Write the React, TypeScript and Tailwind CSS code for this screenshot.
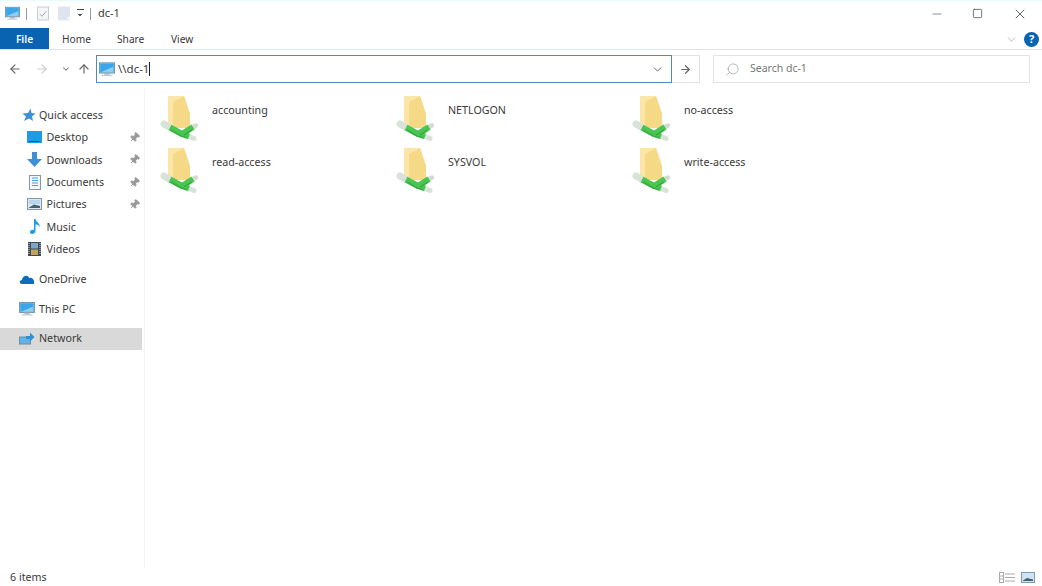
import React from 'react';
import { ArrowLeft, ArrowRight, ArrowUp, ChevronDown, Minus, Pin, Search, Square, X } from 'lucide-react';

function Monitor({ className }: { className?: string }) {
  return (
    <svg viewBox="0 0 18 16" className={className}>
      <rect x="0.5" y="0.5" width="17" height="11.5" fill="#8fc6ea" stroke="#6f8da3" />
      <rect x="1.5" y="1.5" width="15" height="9.5" fill="#3aa5e8" />
      <path d="M2 11 L16 5 V11 Z" fill="#8ccff6" />
      <rect x="6" y="12" width="6" height="2" fill="#a9b7c1" />
      <rect x="3" y="14" width="12" height="1.5" fill="#c3ccd3" />
    </svg>
  );
}

function ShareFolder() {
  return (
    <svg viewBox="0 0 40 48" className="h-12 w-10 shrink-0">
      <path d="M8 2 H24 L30 20 V34 H8 Z" fill="#f9e29b" />
      <path d="M13 8 L24 2 L30 20 V34 H13 Z" fill="#f6d987" />
      <path d="M8 2 H24 L13 8 V34 H8 Z" fill="#fbe6a8" />
      <path d="M4 30 L10 33.5" stroke="#d9e2d9" strokeWidth="7" strokeLinecap="round" />
      <path d="M33 33 L36 31.5" stroke="#d3dcd3" strokeWidth="4.5" strokeLinecap="round" />
      <path d="M29 42.5 L34 44.5" stroke="#d9e2d9" strokeWidth="5" strokeLinecap="round" />
      <path d="M10 33.5 L22 40 L33 33 M22 40 L29 42.5" fill="none" stroke="#4ac552" strokeWidth="6" strokeLinejoin="round" />
      <path d="M11 36 L21 42 L27 43.5 M24 41 L32 36" fill="none" stroke="#33a83c" strokeWidth="1.2" />
    </svg>
  );
}

const quick = [
  { name: 'Desktop', pin: true, icon: <svg viewBox="0 0 15 12" className="h-3 w-[15px]"><rect width="15" height="12" fill="#1c9be8" /><rect x="2" y="10" width="10" height="1" fill="#0b5c94" /></svg> },
  { name: 'Downloads', pin: true, icon: <svg viewBox="0 0 15 15" className="h-[15px] w-[15px]"><path d="M5 0 H10 V7 H15 L7.5 15 L0 7 H5 Z" fill="#3d8fd6" /></svg> },
  { name: 'Documents', pin: true, icon: <svg viewBox="0 0 12 15" className="h-[15px] w-3"><rect x="0.5" y="0.5" width="11" height="14" fill="#f4f7fa" stroke="#8a97a3" /><path d="M3 3 H9 M3 5.5 H9 M3 8 H9 M3 10.5 H9" stroke="#4ba3dd" /></svg> },
  { name: 'Pictures', pin: true, icon: <svg viewBox="0 0 15 12" className="h-3 w-[15px]"><rect x="0.5" y="0.5" width="14" height="11" fill="#dfe9f1" stroke="#8a97a3" /><path d="M2 9.5 L7 6.5 L13 8 V10 H2 Z" fill="#45606f" /><rect x="2" y="2" width="11" height="4" fill="#b9d6ea" /></svg> },
  { name: 'Music', pin: false, icon: <svg viewBox="0 0 12 15" className="h-[15px] w-3"><path d="M5 0 H6.5 C7 3 11 4 11 8 C10 6 8 5.5 6.5 5.5 V12 C6.5 14 4.5 15 3 15 C1.5 15 1 14 1 13 C1 11.5 3 10.5 5 11 Z" fill="#1c9be8" /></svg> },
  { name: 'Videos', pin: false, icon: <svg viewBox="0 0 13 14" className="h-[14px] w-[13px]"><rect width="13" height="14" fill="#3e4a56" /><rect x="3" y="1" width="7" height="5.5" fill="#7ea6c4" /><rect x="3" y="7.5" width="7" height="5.5" fill="#c2a35a" /><path d="M1 1 V13 M12 1 V13" stroke="#d5dbe0" strokeDasharray="1 1" /></svg> },
];

const shares = ['accounting', 'NETLOGON', 'no-access', 'read-access', 'SYSVOL', 'write-access'];

export default function App() {
  return (
    <div className="flex h-screen w-full flex-col overflow-hidden bg-white text-[10.7px] text-[#3a3a3a] font-['Noto_Sans','Open_Sans',sans-serif]">
      {/* title bar */}
      <div className="flex h-7 shrink-0 items-center border-t border-[#e6fbfb] pb-[2px] pl-[5px]">
        <Monitor className="h-[15px] w-[15px]" />
        <div className="ml-[6px] h-3 w-px bg-[#9a9a9a]" />
        <svg viewBox="0 0 13 15" className="ml-[10px] h-[15px] w-3"><rect x="0.5" y="0.5" width="12" height="14" fill="#f5f6f8" stroke="#c4c9d0" /><path d="M3 8 L5.5 10.5 L10 5" fill="none" stroke="#9aa2ad" /></svg>
        <svg viewBox="0 0 13 15" className="ml-[9px] h-[15px] w-3"><rect width="13" height="15" fill="#dfe4ee" /><rect x="10" y="11" width="3" height="4" fill="#f3f4f6" /></svg>
        <div className="ml-[6px] flex flex-col items-center gap-px">
          <div className="h-px w-[7px] bg-[#444]" />
          <ChevronDown className="h-2 w-2 fill-[#444] text-[#444]" />
        </div>
        <div className="ml-[6px] h-3 w-px bg-[#9a9a9a]" />
        <span className="ml-[7px] text-[11px]">dc-1</span>
        <div className="ml-auto flex items-center text-[#444]">
          <Minus className="h-[14px] w-[14px]" strokeWidth={1} />
          <Square className="ml-[28px] h-[11px] w-[11px]" strokeWidth={1.6} />
          <X className="ml-[29px] mr-[14px] h-4 w-4" strokeWidth={1.2} />
        </div>
      </div>

      {/* ribbon tabs */}
      <div className="flex h-[22px] shrink-0 items-center border-b border-[#e3e3e3] text-[10.2px]">
        <div className="flex h-full w-[49px] items-center justify-center bg-[#0a63b0] pt-[2px] font-semibold text-white">File</div>
        <span className="ml-[13px] mt-[2px] w-[55px]">Home</span>
        <span className="mt-[2px] w-[54px]">Share</span>
        <span className="mt-[2px]">View</span>
        <ChevronDown className="ml-auto mt-[2px] h-[13px] w-[13px] text-[#aaa]" strokeWidth={1.5} />
        <div className="ml-[6px] mr-[3px] mt-[1px] flex h-[15px] w-[15px] items-center justify-center rounded-full bg-[#0a63b0] text-[11px] font-bold text-white">?</div>
      </div>

      {/* address row */}
      <div className="flex h-[38px] shrink-0 items-center">
        <ArrowLeft className="ml-[8px] h-[14px] w-[14px] text-[#666]" strokeWidth={2} />
        <ArrowRight className="ml-[13px] h-[14px] w-[14px] text-[#ccc]" strokeWidth={2} />
        <ChevronDown className="ml-[12px] h-[10px] w-[10px] text-[#777]" strokeWidth={2.5} />
        <ArrowUp className="ml-[6px] h-[14px] w-[14px] text-[#666]" strokeWidth={2} />
        <div className="ml-[5px] flex h-7 w-[576px] items-center border border-[#4b8dbf] pl-[2px]">
          <Monitor className="h-[15px] w-4" />
          <span className="ml-[3px] text-[11.5px]">\\dc-1</span>
          <div className="h-[14px] w-px bg-[#222]" />
          <ChevronDown className="ml-auto mr-[7px] h-[13px] w-[13px] text-[#555]" strokeWidth={1.6} />
        </div>
        <div className="flex h-7 w-[28px] items-center justify-center border border-l-0 border-[#e3e3e3]">
          <ArrowRight className="h-[13px] w-[13px] text-[#666]" strokeWidth={2.2} />
        </div>
        <div className="ml-[13px] flex h-7 w-[317px] items-center border border-[#e3e3e3] pl-[11px] text-[#777]">
          <Search className="h-[15px] w-[15px] -scale-x-100 text-[#aaa]" strokeWidth={1.3} />
          <span className="ml-[10px] text-[10.5px]">Search dc-1</span>
        </div>
      </div>

      <div className="flex min-h-0 flex-1">
        {/* nav pane */}
        <div className="w-[145px] shrink-0 border-r border-[#f4f4f4] pb-[18px] pt-[16px]">
          <div className="flex h-[22.3px] items-center pl-[22px]">
            <svg viewBox="0 0 14 14" className="h-[14px] w-[14px]"><path d="M8.5 0.5 L9.5 5 L13.5 5.5 L10 8.5 L11 13 L7 10.5 L2 13 L4 8.5 L0.5 5.5 L6 5 Z" fill="#3d8fd6" /></svg>
            <span className="ml-[3px]">Quick access</span>
          </div>
          {quick.map(q => (
            <div key={q.name} className="flex h-[22.3px] items-center">
              <div className="ml-[27px] flex w-[15px] justify-center">{q.icon}</div>
              <span className="ml-[4.5px]">{q.name}</span>
              {q.pin && <Pin className="ml-auto mr-[4px] h-[11px] w-[11px] rotate-45 fill-[#999] text-[#999]" />}
            </div>
          ))}
          <div className="mt-[7.7px] flex h-[22.4px] items-center pl-[19px]">
            <svg viewBox="0 0 16 10" className="h-[10px] w-4"><path d="M3 10 C0 10 0 6 3 6 C3 2 9 0 10 4 C13 3 16 6 15 10 Z" fill="#0e6cb8" /></svg>
            <span className="ml-[4px]">OneDrive</span>
          </div>
          <div className="mt-[7.6px] flex h-[22.4px] items-center pl-[19px]">
            <Monitor className="h-[14px] w-4" />
            <span className="ml-[4px]">This PC</span>
          </div>
          <div className="mr-[2px] mt-[7.6px] flex h-[22.4px] items-center bg-[#d9d9d9] pb-px pl-[19px]">
            <svg viewBox="0 0 16 13" className="h-[13px] w-4"><rect x="0.5" y="5" width="11" height="7" fill="#5fb3e8" stroke="#6f8da3" /><path d="M7 4 H11 V0.5 L15.5 5 L11 9.5 V7 H7 Z" fill="#2f8fd6" /></svg>
            <span className="ml-[4px]">Network</span>
          </div>
        </div>

        {/* content */}
        <div className="grid flex-1 grid-cols-[236px_236px_236px] content-start auto-rows-[52px] pl-[15px] pt-[6px]">
          {shares.map(s => (
            <div key={s} className="flex items-start">
              <ShareFolder />
              <span className="ml-[12px] mt-[8px]">{s}</span>
            </div>
          ))}
        </div>
      </div>

      {/* status bar */}
      <div className="flex h-[18px] shrink-0 items-center pl-[10px]">
        <span>6 items</span>
        <svg viewBox="0 0 16 11" className="ml-auto h-[11px] w-4">
          <rect x="0.5" y="0.5" width="4" height="10" fill="none" stroke="#aaa" />
          <path d="M0.5 4 H4.5 M0.5 7 H4.5 M6 2 H16 M6 5.5 H16 M6 9 H16" stroke="#aaa" />
        </svg>
        <svg viewBox="0 0 14 11" className="ml-[6px] mr-[7px] h-[11px] w-[14px]">
          <rect x="0.5" y="0.5" width="13" height="10" fill="#cfe3f3" stroke="#7d9cb5" />
          <path d="M2 8.5 L6 6 L12 7.5 V9 H2 Z" fill="#45606f" />
        </svg>
      </div>
    </div>
  );
}
